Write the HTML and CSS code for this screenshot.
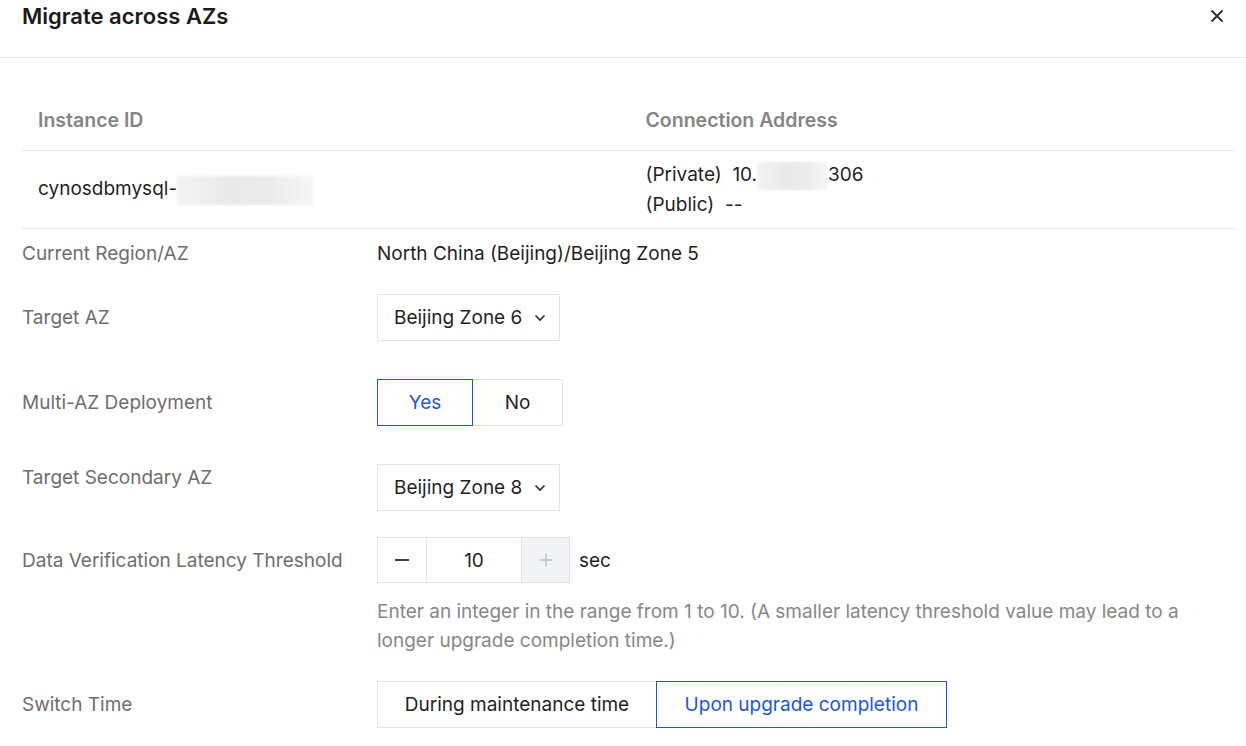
FILE: index.html
```html
<!DOCTYPE html>
<html lang="en">

<head>
    <meta charset="UTF-8">
    <meta name="viewport" content="width=device-width, initial-scale=1.0">
    <title>Migrate across AZs</title>
    <link rel="stylesheet" href="styles.css">
</head>

<body>
    <div class="dialog">
        <div class="dialog-header">
            <h2>Migrate across AZs</h2>
            <button class="close-button" aria-label="Close">
                <svg width="14" height="14" viewBox="0 0 14 14">
                    <path d="M1.5 1.5 L12.5 12.5 M12.5 1.5 L1.5 12.5" stroke="#2b2b2b" stroke-width="1.8" fill="none" />
                </svg>
            </button>
        </div>

        <div class="dialog-body">
            <table class="instance-table">
                <thead>
                    <tr>
                        <th>Instance ID</th>
                        <th>Connection Address</th>
                    </tr>
                </thead>
                <tbody>
                    <tr>
                        <td>cynosdbmysql-<span class="masked masked-id"></span></td>
                        <td>
                            <div>(Private)&nbsp; 10.<span class="masked masked-ip"></span>306</div>
                            <div>(Public)&nbsp; --</div>
                        </td>
                    </tr>
                </tbody>
            </table>

            <div class="form">
                <div class="form-row">
                    <div class="form-label plain">Current Region/AZ</div>
                    <div class="form-value text">North China (Beijing)/Beijing Zone 5</div>
                </div>

                <div class="form-row loose">
                    <div class="form-label">Target AZ</div>
                    <div class="form-value">
                        <div class="select">
                            <span>Beijing Zone 6</span>
                            <svg class="chevron" width="12" height="8" viewBox="0 0 12 8">
                                <path d="M1.5 1.5 L6 6 L10.5 1.5" stroke="#2b2b2b" stroke-width="1.6" fill="none" />
                            </svg>
                        </div>
                    </div>
                </div>

                <div class="form-row loose">
                    <div class="form-label">Multi-AZ Deployment</div>
                    <div class="form-value">
                        <div class="segmented">
                            <button class="seg active seg-yes">Yes</button>
                            <button class="seg seg-no">No</button>
                        </div>
                    </div>
                </div>

                <div class="form-row">
                    <div class="form-label plain">Target Secondary AZ</div>
                    <div class="form-value">
                        <div class="select">
                            <span>Beijing Zone 8</span>
                            <svg class="chevron" width="12" height="8" viewBox="0 0 12 8">
                                <path d="M1.5 1.5 L6 6 L10.5 1.5" stroke="#2b2b2b" stroke-width="1.6" fill="none" />
                            </svg>
                        </div>
                    </div>
                </div>

                <div class="form-row">
                    <div class="form-label">Data Verification Latency Threshold</div>
                    <div class="form-value">
                        <div class="stepper-line">
                            <div class="stepper">
                                <button class="step-btn">
                                    <svg width="16" height="16" viewBox="0 0 16 16">
                                        <path d="M1 8 H15" stroke="#2b2b2b" stroke-width="1.8" />
                                    </svg>
                                </button>
                                <input class="step-input" type="text" value="10">
                                <button class="step-btn disabled">
                                    <svg width="16" height="16" viewBox="0 0 16 16">
                                        <path d="M1.5 8 H14.5 M8 1.5 V14.5" stroke="#b9bbc2" stroke-width="1.4" />
                                    </svg>
                                </button>
                            </div>
                            <span class="unit">sec</span>
                        </div>
                        <p class="help">Enter an integer in the range from 1 to 10. (A smaller latency threshold value may lead to a longer upgrade completion time.)</p>
                    </div>
                </div>

                <div class="form-row">
                    <div class="form-label">Switch Time</div>
                    <div class="form-value">
                        <div class="segmented">
                            <button class="seg seg-wide">During maintenance time</button>
                            <button class="seg seg-wide active">Upon upgrade completion</button>
                        </div>
                    </div>
                </div>
            </div>
        </div>
    </div>
</body>

</html>
```

FILE: styles.css
```css
body {
    margin: 0;
    padding: 0;
    font-family: Inter, "Liberation Sans", Arial, sans-serif;
    font-size: 19px;
    color: #1f1f1f;
    background: #fff;
}

.dialog {
    width: 1246px;
    height: 746px;
    overflow: hidden;
}

/* Header */
.dialog-header {
    display: flex;
    justify-content: space-between;
    align-items: flex-start;
    padding: 0 22px 24px 22px;
    border-bottom: 1px solid #e8e9ee;
}

.dialog-header h2 {
    margin: 0;
    font-size: 22px;
    font-weight: 600;
    line-height: 33px;
    color: #1a1a1a;
}

.close-button {
    margin-top: 9px;
    padding: 0;
    border: none;
    background: none;
    cursor: pointer;
    display: flex;
}

.dialog-body {
    padding: 32px 9px 0 22px;
}

/* Instance table */
.instance-table {
    width: 100%;
    border-collapse: collapse;
    table-layout: fixed;
}

.instance-table th {
    text-align: left;
    font-weight: 600;
    font-size: 19.5px;
    color: #858585;
    height: 60px;
    padding: 0 16px;
    border-bottom: 1px solid #e8e9ee;
}

.instance-table td {
    height: 77px;
    padding: 0 16px;
    line-height: 29px;
    border-bottom: 1px solid #e8e9ee;
    vertical-align: middle;
}

.masked {
    display: inline-block;
    vertical-align: middle;
    background: linear-gradient(90deg, #f4f4f4, #e9e9e9 40%, #ececec 70%, #f6f6f6);
    filter: blur(1px);
}

.masked-id {
    width: 136px;
    height: 29px;
}

.masked-ip {
    width: 71px;
    height: 28px;
}

/* Form */
.form {
    display: flex;
    flex-direction: column;
    gap: 26px;
    padding-top: 11px;
}

.form-row {
    display: flex;
    align-items: flex-start;
}

.form-row.loose {
    margin-bottom: 12px;
}

.form-label {
    width: 355px;
    flex-shrink: 0;
    color: #6e6e6e;
    line-height: 28px;
    padding-top: 10px;
}

.form-label.plain {
    padding-top: 0;
}

.form-value {
    flex: 1;
}

.form-value.text {
    line-height: 28px;
}

.select {
    display: inline-flex;
    align-items: center;
    gap: 12px;
    height: 45px;
    padding: 0 13px 0 16px;
    border: 1px solid #e3e4e9;
    color: #1f1f1f;
}

.chevron {
    margin-top: 1px;
}

.segmented {
    display: inline-flex;
}

.seg {
    height: 47px;
    border: 1px solid #e3e4e9;
    background: #fff;
    font-family: inherit;
    font-size: 19px;
    color: #1f1f1f;
    padding: 0;
    cursor: pointer;
}

.seg + .seg {
    margin-left: -1px;
}

.seg.active {
    border-color: #1f55d6;
    color: #1f55d6;
    position: relative;
}

.seg-yes {
    width: 96px;
}

.seg-no {
    width: 91px;
}

.seg-wide {
    width: 280px;
}

.seg-wide.active {
    width: 291px;
}

.stepper-line {
    display: flex;
    align-items: center;
    gap: 9px;
}

.stepper {
    display: inline-flex;
    height: 44px;
    border: 1px solid #e3e4e9;
}

.step-btn {
    width: 48px;
    border: none;
    background: #fff;
    display: flex;
    justify-content: center;
    align-items: center;
    padding: 0;
}

.step-btn.disabled {
    background: #f2f3f7;
    border-left: 1px solid #e3e4e9;
}

.step-input {
    width: 94px;
    border: none;
    border-left: 1px solid #e3e4e9;
    text-align: center;
    font-family: inherit;
    font-size: 19px;
    color: #1f1f1f;
    padding: 0;
    outline: none;
}

.unit {
    color: #1f1f1f;
}

.help {
    margin: 14px 0 0 0;
    max-width: 830px;
    color: #878787;
    line-height: 29px;
}
```
